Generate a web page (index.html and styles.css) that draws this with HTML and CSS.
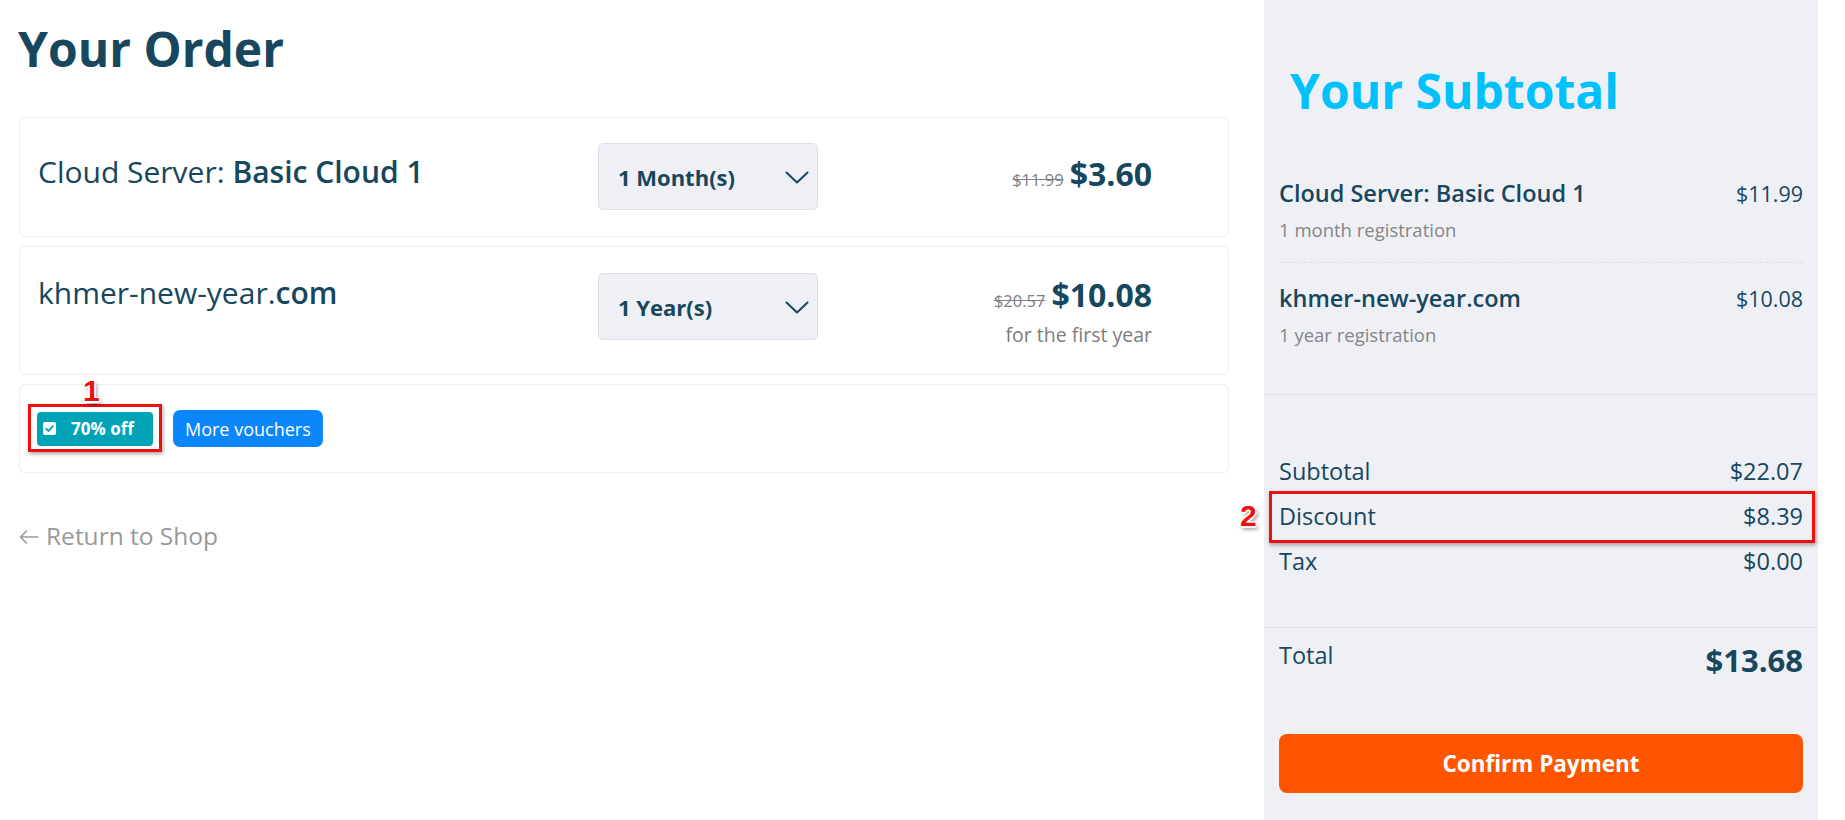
FILE: index.html
```html
<!DOCTYPE html>
<html lang="en">
<head>
<meta charset="utf-8">
<title>Your Order</title>
<link rel="stylesheet" href="styles.css">
</head>
<body>
<div class="page">
  <main class="order">
    <h1 class="order-title">Your Order</h1>

    <section class="order-card order-card--single">
      <div class="order-name">Cloud Server: <strong>Basic Cloud 1</strong></div>
      <div class="period-select">
        <span>1 Month(s)</span>
        <svg class="chev" width="24" height="13" viewBox="0 0 24 13"><polyline points="1.5,1.5 12,11.5 22.5,1.5" fill="none" stroke="#17475d" stroke-width="2" stroke-linecap="round" stroke-linejoin="round"/></svg>
      </div>
      <div class="order-price">
        <div class="price-line"><s class="old-price">$11.99</s><span class="new-price">$3.60</span></div>
      </div>
    </section>

    <section class="order-card">
      <div class="order-name">khmer-new-year.<strong>com</strong></div>
      <div class="period-select">
        <span>1 Year(s)</span>
        <svg class="chev" width="24" height="13" viewBox="0 0 24 13"><polyline points="1.5,1.5 12,11.5 22.5,1.5" fill="none" stroke="#17475d" stroke-width="2" stroke-linecap="round" stroke-linejoin="round"/></svg>
      </div>
      <div class="order-price">
        <div class="price-line"><s class="old-price">$20.57</s><span class="new-price">$10.08</span></div>
        <div class="price-note">for the first year</div>
      </div>
    </section>

    <section class="voucher-card">
      <span class="voucher-wrap">
        <span class="voucher-badge">
          <svg class="check-icon" width="13" height="13" viewBox="0 0 13 13"><rect width="13" height="13" rx="2" fill="#fff"/><polyline points="3.2,6.8 5.6,9 9.8,4.2" fill="none" stroke="#00a3b5" stroke-width="1.8" stroke-linecap="round" stroke-linejoin="round"/></svg>
          70% off
        </span>
        <span class="mark-box mark-box--one"></span>
        <span class="mark-num mark-num--one">1</span>
      </span>
      <button class="more-btn" type="button">More vouchers</button>
    </section>

    <a class="back-link" href="#">
      <svg width="20" height="14" viewBox="0 0 20 14"><path d="M19 7H1.5M7.5 1L1.5 7l6 6" fill="none" stroke="#9a9a9a" stroke-width="1.6" stroke-linecap="round" stroke-linejoin="round"/></svg>
      Return to Shop
    </a>
  </main>

  <aside class="summary">
    <h2 class="summary-title">Your Subtotal</h2>

    <div class="summary-items">
      <div class="summary-item">
        <div class="summary-row">
          <span class="item-title">Cloud Server: Basic Cloud 1</span>
          <span class="item-price">$11.99</span>
        </div>
        <div class="item-sub">1 month registration</div>
      </div>
      <div class="summary-item">
        <div class="summary-row">
          <span class="item-title">khmer-new-year.com</span>
          <span class="item-price">$10.08</span>
        </div>
        <div class="item-sub">1 year registration</div>
      </div>
    </div>

    <div class="summary-totals">
      <div class="total-row"><span>Subtotal</span><span>$22.07</span></div>
      <div class="total-row total-row--marked">
        <span>Discount</span><span>$8.39</span>
        <span class="mark-box mark-box--two"></span>
        <span class="mark-num mark-num--two">2</span>
      </div>
      <div class="total-row"><span>Tax</span><span>$0.00</span></div>
    </div>

    <div class="summary-final">
      <div class="final-row">
        <span class="final-label">Total</span>
        <span class="final-value">$13.68</span>
      </div>
      <button class="confirm-btn" type="button">Confirm Payment</button>
    </div>
  </aside>
</div>
</body>
</html>
```

FILE: styles.css
```css
* { box-sizing: border-box; }

html, body {
  margin: 0;
  padding: 0;
  background: #ffffff;
}

body {
  font-family: "Open Sans", "DejaVu Sans", sans-serif;
  color: #17475d;
}

.page {
  display: flex;
  gap: 35px;
  padding: 0 27px 0 19px;
  min-height: 820px;
}

/* ---------- left column ---------- */
.order {
  flex: 1;
  padding-top: 19px;
}

.order-title {
  margin: 0 0 38px -1px;
  font-size: 48px;
  line-height: 60px;
  font-weight: 700;
  color: #17475d;
}

.order-card {
  display: grid;
  grid-template-columns: 560px 220px 1fr;
  align-items: start;
  border: 1px solid #eceef2;
  border-radius: 6px;
  padding: 26px 76px 26px 18px;
  margin-bottom: 9px;
}

.order-card--single {
  padding-top: 25px;
}

.order-name {
  font-size: 30px;
  line-height: 40px;
  font-weight: 400;
  white-space: nowrap;
}

.order-name strong { font-weight: 600; }

.order-card--single .order-name { padding-top: 9px; }
.order-card--single .order-price { padding-top: 11px; }

.period-select {
  height: 67px;
  display: flex;
  align-items: center;
  justify-content: space-between;
  padding: 0 8px 0 19px;
  background: #eff0f5;
  border: 1px solid #dcdfe5;
  border-radius: 5px;
  font-size: 22px;
  font-weight: 700;
}

.chev { display: block; margin-top: 2px; }

.order-price {
  text-align: right;
  padding-top: 2px;
}

.price-line {
  display: flex;
  justify-content: flex-end;
  align-items: baseline;
  gap: 6px;
  height: 40px;
  line-height: 40px;
}

.old-price {
  font-size: 16.5px;
  line-height: 17px;
  color: #808080;
  text-decoration: line-through;
}

.new-price {
  font-size: 32px;
  line-height: 40px;
  font-weight: 700;
  color: #17475d;
}

.price-note {
  margin-top: 7px;
  font-size: 19.5px;
  line-height: 26px;
  color: #7c7c7c;
}

.voucher-card {
  display: flex;
  align-items: center;
  gap: 20px;
  border: 1px solid #eceef2;
  border-radius: 6px;
  padding: 25px 18px 25px 17px;
  height: 89px;
}

.voucher-wrap {
  position: relative;
  display: inline-flex;
}

.voucher-badge {
  display: inline-flex;
  align-items: center;
  gap: 15px;
  height: 34px;
  width: 116px;
  padding: 0 10px 0 6px;
  background: #00a3b5;
  border-radius: 4px;
  color: #ffffff;
  font-size: 17px;
  font-weight: 700;
}

.check-icon { flex: none; }

.more-btn {
  height: 37px;
  padding: 0 12px;
  border: 0;
  border-radius: 7px;
  background: #0b86fb;
  color: #ffffff;
  font-family: inherit;
  font-size: 18px;
  font-weight: 400;
}

.back-link {
  display: inline-flex;
  align-items: center;
  gap: 7px;
  margin-top: 47px;
  font-size: 24.5px;
  line-height: 32px;
  color: #999999;
  text-decoration: none;
}

.back-link svg { margin-top: 1px; }

/* ---------- annotations ---------- */
.mark-box {
  position: absolute;
  border: 3px solid #ee0f0f;
  box-shadow: 1px 2px 4px rgba(0, 0, 0, 0.35);
  pointer-events: none;
}

.mark-box--one {
  left: -9px;
  right: -9px;
  top: -8px;
  bottom: -6px;
}

.mark-num {
  position: absolute;
  font-family: "Liberation Sans", "DejaVu Sans", sans-serif;
  font-weight: 700;
  color: #ee0f0f;
  font-size: 30px;
  line-height: 30px;
  text-shadow: 1.5px 0 0 #fff, -1.5px 0 0 #fff, 0 1.5px 0 #fff, 0 -1.5px 0 #fff,
    1px 1px 0 #fff, -1px -1px 0 #fff, 1px -1px 0 #fff, -1px 1px 0 #fff,
    2px 3px 4px rgba(0, 0, 0, 0.5);
}

.mark-num--one {
  left: 46px;
  top: -36px;
}

.mark-box--two {
  left: -10px;
  right: -12px;
  top: -3px;
  bottom: -4px;
}

.mark-num--two {
  left: -39px;
  top: 7px;
}

/* ---------- right summary ---------- */
.summary {
  width: 554px;
  flex: none;
  background: #eff0f5;
  padding-top: 61px;
}

.summary-title {
  margin: 0 0 37px 26px;
  font-size: 48px;
  line-height: 60px;
  font-weight: 700;
  color: #00c1fc;
}

.summary-items {
  padding: 0 15px 27px;
  border-bottom: 1px solid #dfe1e6;
}

.summary-item {
  padding: 19px 0;
}

.summary-item + .summary-item {
  border-top: 1px dashed #dcdee3;
}

.summary-row {
  display: flex;
  justify-content: space-between;
  align-items: baseline;
  line-height: 32px;
}

.item-title {
  font-size: 23.5px;
  font-weight: 600;
}

.item-price {
  font-size: 21.5px;
  font-weight: 400;
}

.item-sub {
  margin-top: 7px;
  font-size: 18.5px;
  line-height: 26px;
  color: #858585;
}

.summary-totals {
  padding: 54px 15px 43px;
  border-bottom: 1px solid #dfe1e6;
}

.total-row {
  display: flex;
  justify-content: space-between;
  align-items: baseline;
  font-size: 23.5px;
  line-height: 45px;
}

.total-row--marked {
  position: relative;
}

.summary-final {
  padding: 12px 15px 0;
}

.final-row {
  display: flex;
  justify-content: space-between;
  align-items: flex-start;
}

.final-label {
  font-size: 23.5px;
  line-height: 30px;
}

.final-value {
  font-size: 31px;
  line-height: 40px;
  font-weight: 700;
}

.confirm-btn {
  display: block;
  width: 100%;
  height: 59px;
  margin-top: 54px;
  border: 0;
  border-radius: 8px;
  background: #ff5500;
  color: #ffffff;
  font-family: inherit;
  font-size: 22.5px;
  font-weight: 700;
}
```
